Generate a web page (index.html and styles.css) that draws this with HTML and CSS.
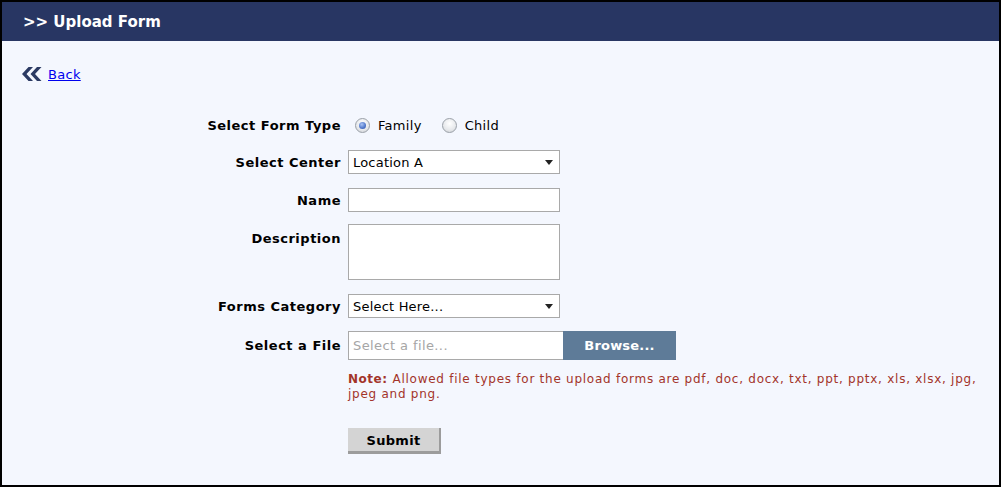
FILE: index.html
```html
<!DOCTYPE html>
<html>
<head>
<meta charset="utf-8">
<link rel="stylesheet" href="styles.css">
</head>
<body>
<div class="page">
  <div class="header">&gt;&gt; Upload Form</div>
  <div class="content">
    <div class="back">
      <svg class="back-icon" width="22" height="14" viewBox="0 0 22 14">
        <path d="M7.5 0 L1 7 L7.5 14 L12 14 L5.5 7 L12 0 Z" fill="#2b3a63"/>
        <path d="M16 0 L9.5 7 L16 14 L20.5 14 L14 7 L20.5 0 Z" fill="#2b3a63"/>
      </svg>
      <a href="#" class="back-link">Back</a>
    </div>
    <div class="form">
      <div class="row row-type">
        <div class="label">Select Form Type</div>
        <div class="control radios">
          <span class="radio checked"></span><span class="radio-text">Family</span>
          <span class="radio"></span><span class="radio-text">Child</span>
        </div>
      </div>
      <div class="row row-center">
        <div class="label">Select Center</div>
        <div class="control"><div class="select">Location A<span class="caret"></span></div></div>
      </div>
      <div class="row row-name">
        <div class="label">Name</div>
        <div class="control"><div class="input"></div></div>
      </div>
      <div class="row row-desc">
        <div class="label">Description</div>
        <div class="control"><div class="textarea"></div></div>
      </div>
      <div class="row row-cat">
        <div class="label">Forms Category</div>
        <div class="control"><div class="select">Select Here...<span class="caret"></span></div></div>
      </div>
      <div class="row row-file">
        <div class="label">Select a File</div>
        <div class="control file">
          <div class="file-input">Select a file...</div>
          <div class="browse">Browse...</div>
        </div>
      </div>
      <div class="row row-note">
        <div class="label"></div>
        <div class="control note">
          <div class="note-line"><b class="note-head">Note:</b><span>Allowed file types for the upload forms are pdf, doc, docx, txt, ppt, pptx, xls, xlsx, jpg,</span></div>
          <div class="note-line">jpeg and png.</div>
        </div>
      </div>
      <div class="row row-submit">
        <div class="label"></div>
        <div class="control"><div class="submit">Submit</div></div>
      </div>
    </div>
  </div>
</div>
</body>
</html>
```
FILE: styles.css
```css
* { box-sizing: border-box; }
html, body { margin: 0; padding: 0; }
body {
  font-family: "DejaVu Sans", Verdana, sans-serif;
  font-size: 13px;
  color: #000;
}
.page {
  width: 1001px;
  height: 487px;
  border: 2px solid #000;
  background: #f4f7fe;
  display: flex;
  flex-direction: column;
}
.header {
  height: 39px;
  background: #283663;
  color: #fff;
  font-weight: bold;
  font-size: 15px;
  padding-left: 21px;
  display: flex;
  align-items: center;
}
.content { flex: 1; }
.back {
  display: flex;
  align-items: center;
  height: 20px;
  margin-top: 23px;
  padding-left: 19px;
}
.back-icon { margin-right: 5px; }
.back-link {
  color: #0000ee;
  text-decoration: underline;
  font-size: 13px;
  letter-spacing: 0.3px;
}
.form { margin-top: 29px; }
.row {
  display: flex;
  align-items: center;
}
.label {
  width: 339px;
  flex: none;
  text-align: right;
  font-weight: bold;
  font-size: 13px;
  letter-spacing: 0.5px;
}
.control { margin-left: 7px; }
.row-type { height: 24px; }
.row-center { margin-top: 13px; }
.row-name { margin-top: 14px; }
.row-desc { margin-top: 12px; align-items: flex-start; }
.row-desc .label { padding-top: 7px; }
.row-cat { margin-top: 14px; }
.row-file { margin-top: 13px; }
.row-note { margin-top: 12px; align-items: flex-start; }
.row-submit { margin-top: 26px; }
.radios { display: flex; align-items: center; }
.radio {
  width: 15px; height: 15px;
  border-radius: 50%;
  border: 1px solid #9aa0a8;
  background: radial-gradient(circle at 50% 35%, #ffffff 0%, #e6e8eb 60%, #c9ccd1 100%);
  position: relative;
}
.radio.checked { margin-left: 7px; }
.radio.checked::after {
  content: "";
  position: absolute;
  left: 3px; top: 3px;
  width: 7px; height: 7px;
  border-radius: 50%;
  background: radial-gradient(circle at 40% 35%, #a9c4f5 0%, #4f76c9 60%, #2f52a4 100%);
}
.radio-text { margin-left: 8px; margin-right: 20px; font-size: 13px; letter-spacing: 0.3px; }
.select, .input {
  width: 212px;
  height: 24px;
  border: 1px solid #a9a9a9;
  background: #fff;
  position: relative;
  padding-left: 4px;
  display: flex;
  align-items: center;
  font-size: 13px;
  letter-spacing: 0.2px;
}
.caret {
  position: absolute;
  right: 6px;
  top: 9px;
  width: 0; height: 0;
  border-left: 4px solid transparent;
  border-right: 4px solid transparent;
  border-top: 5px solid #222;
}
.textarea {
  width: 212px;
  height: 56px;
  border: 1px solid #a9a9a9;
  background: #fff;
}
.file { display: flex; }
.file-input {
  width: 215px;
  height: 29px;
  border: 1px solid #a9a9a9;
  border-right: none;
  background: #fff;
  color: #a6a6a6;
  padding-left: 4px;
  display: flex;
  align-items: center;
  font-size: 13px;
  letter-spacing: 0.4px;
}
.browse {
  width: 113px;
  height: 29px;
  background: #5e7b98;
  color: #fff;
  font-weight: bold;
  font-size: 13px;
  letter-spacing: 0.2px;
  display: flex;
  align-items: center;
  justify-content: center;
}
.note {
  color: #a3342a;
  font-size: 12px;
  line-height: 15px;
  letter-spacing: 0.74px;
  width: 640px;
}
.note-line { white-space: nowrap; }
.note-head {
  display: inline-block;
  margin-right: 5px;
  letter-spacing: 0.5px;
}
.submit {
  width: 93px;
  height: 26px;
  background: #d4d4d4;
  border-right: 2px solid #9c9c9c;
  border-bottom: 3px solid #9c9c9c;
  font-weight: bold;
  font-size: 13px;
  letter-spacing: 0.3px;
  display: flex;
  align-items: center;
  justify-content: center;
  padding-top: 1px;
}
```
